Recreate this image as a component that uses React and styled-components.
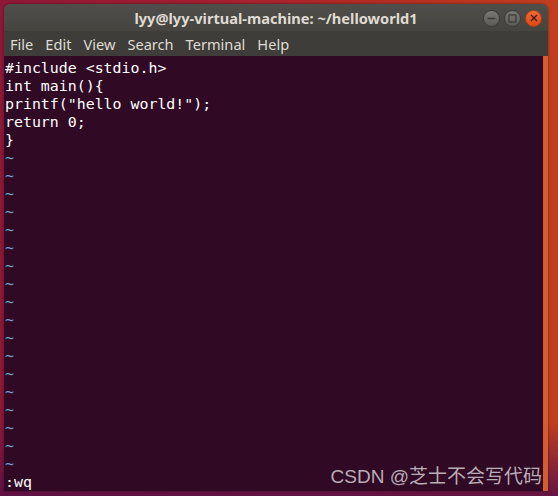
import React from "react";
import styled, { createGlobalStyle } from "styled-components";

const GlobalStyle = createGlobalStyle`
  html, body {
    margin: 0;
    padding: 0;
  }
  body {
    width: 558px;
    height: 496px;
    overflow: hidden;
  }
`;

const Desktop = styled.div`
  position: relative;
  width: 558px;
  height: 496px;
  box-sizing: border-box;
  padding: 4px 10px 5px 4px;
  display: flex;
  background:
    linear-gradient(to bottom, rgba(0, 0, 0, 0) 85%, rgba(90, 16, 70, 0.9)),
    linear-gradient(to right, #8e1737 0%, #a3202f 40%, #b8341f 80%, #c13f20 100%);
`;

const Window = styled.div`
  flex: 1;
  display: flex;
  flex-direction: column;
  border-radius: 6px 6px 0 0;
  overflow: hidden;
  box-shadow: 0 0 3px rgba(0, 0, 0, 0.4);
`;

const TitleBar = styled.div`
  height: 28px;
  display: grid;
  grid-template-columns: 1fr auto 1fr;
  align-items: center;
  background: linear-gradient(to bottom, #4f4e4a, #45443f);
  font-family: "Noto Sans", "DejaVu Sans", sans-serif;
`;

const Title = styled.div`
  grid-column: 2;
  color: #dfdbd2;
  font-size: 14.6px;
  font-weight: 700;
`;

const Controls = styled.div`
  grid-column: 3;
  justify-self: end;
  display: flex;
  gap: 4px;
  padding-right: 6px;
  padding-top: 1px;
`;

const Control = styled.div`
  width: 17px;
  height: 17px;
  border-radius: 50%;
  box-sizing: border-box;
  display: flex;
  align-items: center;
  justify-content: center;
  border: 1px solid ${(p) => (p.$close ? "#b13a12" : "#3a3936")};
  background: ${(p) =>
    p.$close
      ? "linear-gradient(to bottom, #f26a35, #dd4814)"
      : "linear-gradient(to bottom, #7a7975, #5b5a56)"};
`;

const MenuBar = styled.div`
  height: 25px;
  display: flex;
  align-items: center;
  padding: 1px 0 0 2px;
  box-sizing: border-box;
  background: #3e3d39;
  font-family: "Noto Sans", "DejaVu Sans", sans-serif;
  font-size: 14.6px;
  color: #dfdbd2;
`;

const MenuItem = styled.span`
  padding: 0 4px;
  margin-right: 4px;
`;

const Body = styled.div`
  flex: 1;
  display: flex;
`;

const Terminal = styled.div`
  flex: 1;
  background: #300a24;
  padding: 3px 0 0 1px;
  font-family: "DejaVu Sans Mono", "Liberation Mono", monospace;
  font-size: 14.9px;
  line-height: 18px;
  color: #ffffff;
  white-space: pre;
`;

const Line = styled.div`
  height: 18px;
  color: ${(p) => (p.$tilde ? "#729fcf" : "#ffffff")};
`;

const Scrollbar = styled.div`
  width: 5px;
  background: #d55b31;
`;

const Watermark = styled.div`
  position: absolute;
  right: 16px;
  bottom: 8px;
  font-family: "Liberation Sans", "Noto Sans CJK SC", sans-serif;
  font-size: 19px;
  color: rgba(225, 220, 225, 0.78);
`;

const code = [
  "#include <stdio.h>",
  "int main(){",
  'printf("hello world!");',
  "return 0;",
  "}",
];

const menus = ["File", "Edit", "View", "Search", "Terminal", "Help"];

const MinIcon = () => (
  <svg width="9" height="9" viewBox="0 0 9 9">
    <line x1="0.5" y1="4.5" x2="8.5" y2="4.5" stroke="#3b3a36" strokeWidth="1.3" />
  </svg>
);

const MaxIcon = () => (
  <svg width="9" height="9" viewBox="0 0 9 9">
    <rect x="1" y="1" width="7" height="7" fill="none" stroke="#3b3a36" strokeWidth="1.2" />
  </svg>
);

const CloseIcon = () => (
  <svg width="8" height="8" viewBox="0 0 8 8">
    <path d="M1 1 L7 7 M7 1 L1 7" stroke="#3b1a0d" strokeWidth="1.3" />
  </svg>
);

const App = () => {
  return (
    <>
      <GlobalStyle />
      <Desktop>
        <Window>
          <TitleBar>
            <Title>lyy@lyy-virtual-machine: ~/helloworld1</Title>
            <Controls>
              <Control>
                <MinIcon />
              </Control>
              <Control>
                <MaxIcon />
              </Control>
              <Control $close>
                <CloseIcon />
              </Control>
            </Controls>
          </TitleBar>
          <MenuBar>
            {menus.map((m) => (
              <MenuItem key={m}>{m}</MenuItem>
            ))}
          </MenuBar>
          <Body>
            <Terminal>
              {code.map((l, i) => (
                <Line key={i}>{l}</Line>
              ))}
              {Array.from({ length: 18 }).map((_, i) => (
                <Line key={"t" + i} $tilde>
                  ~
                </Line>
              ))}
              <Line>:wq</Line>
            </Terminal>
            <Scrollbar />
          </Body>
        </Window>
        <Watermark>CSDN @芝士不会写代码</Watermark>
      </Desktop>
    </>
  );
};

export default App;
